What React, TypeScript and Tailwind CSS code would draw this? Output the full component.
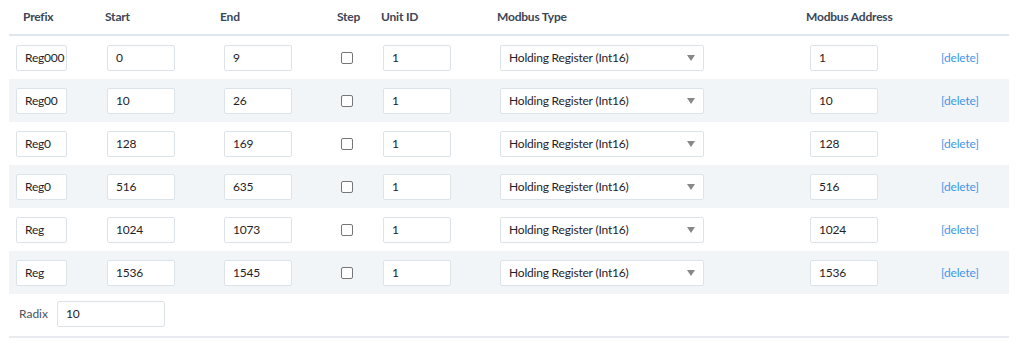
import React from "react";

const rows = [
  { prefix: "Reg000", start: "0", end: "9", addr: "1" },
  { prefix: "Reg00", start: "10", end: "26", addr: "10" },
  { prefix: "Reg0", start: "128", end: "169", addr: "128" },
  { prefix: "Reg0", start: "516", end: "635", addr: "516" },
  { prefix: "Reg", start: "1024", end: "1073", addr: "1024" },
  { prefix: "Reg", start: "1536", end: "1545", addr: "1536" },
];

const grid = "grid grid-cols-[89px_117px_115px_44px_116px_310px_130px_79px]";
const inputCls =
  "h-[26px] border border-[#dde3ea] rounded-[2px] bg-white px-2 flex items-center text-[12px] tracking-[-0.2px] text-[#1f2328] whitespace-nowrap overflow-hidden";

export default function App() {
  return (
    <div
      className="w-[1024px] h-[347px] bg-white pl-[9px] pr-[15px]"
      style={{ fontFamily: "Lato, 'Noto Sans', sans-serif" }}
    >
      <div className={`${grid} h-[36px] items-center border-b-2 border-[#dfe6ee] text-[12px] tracking-[-0.2px] font-bold text-[#3b4656]`}>
        <div className="pl-[14px]">Prefix</div>
        <div className="pl-[7px]">Start</div>
        <div className="pl-[5px]">End</div>
        <div className="pl-[7px]">Step</div>
        <div className="pl-[7px]">Unit ID</div>
        <div className="pl-[7px]">Modbus Type</div>
        <div className="pl-[6px]">Modbus Address</div>
        <div></div>
      </div>
      {rows.map((r, i) => (
        <div
          key={i}
          className={`${grid} h-[43px] items-center ${i % 2 === 1 ? "bg-[#f2f5f8]" : "bg-white"}`}
        >
          <div className="pl-[7px]">
            <div className={`${inputCls} w-[51px]`}>{r.prefix}</div>
          </div>
          <div className="pl-[9px]">
            <div className={`${inputCls} w-[68px]`}>{r.start}</div>
          </div>
          <div className="pl-[9px]">
            <div className={`${inputCls} w-[68px]`}>{r.end}</div>
          </div>
          <div className="pl-[11px] flex items-center">
            <div className="w-[12px] h-[12px] border border-[#767676] rounded-[2px] bg-white"></div>
          </div>
          <div className="pl-[9px]">
            <div className={`${inputCls} w-[68px]`}>1</div>
          </div>
          <div className="pl-[10px]">
            <div className={`${inputCls} w-[204px] justify-between pr-[8px]`}>
              <span>Holding Register (Int16)</span>
              <svg width="8" height="6" viewBox="0 0 8 6">
                <path d="M0 0 L8 0 L4 6 Z" fill="#888" />
              </svg>
            </div>
          </div>
          <div className="pl-[10px]">
            <div className={`${inputCls} w-[68px]`}>{r.addr}</div>
          </div>
          <div className="pl-[11px] text-[12px] tracking-[-0.2px] text-[#3f97e6]">[delete]</div>
        </div>
      ))}
      <div className="h-[44px] flex items-center border-b-2 border-[#e8ecf0] pb-[3px]">
        <span className="pl-[10px] w-[48px] text-[12px] text-[#4a5260]">Radix</span>
        <div className={`${inputCls} w-[108px] h-[25px]`}>10</div>
      </div>
    </div>
  );
}
